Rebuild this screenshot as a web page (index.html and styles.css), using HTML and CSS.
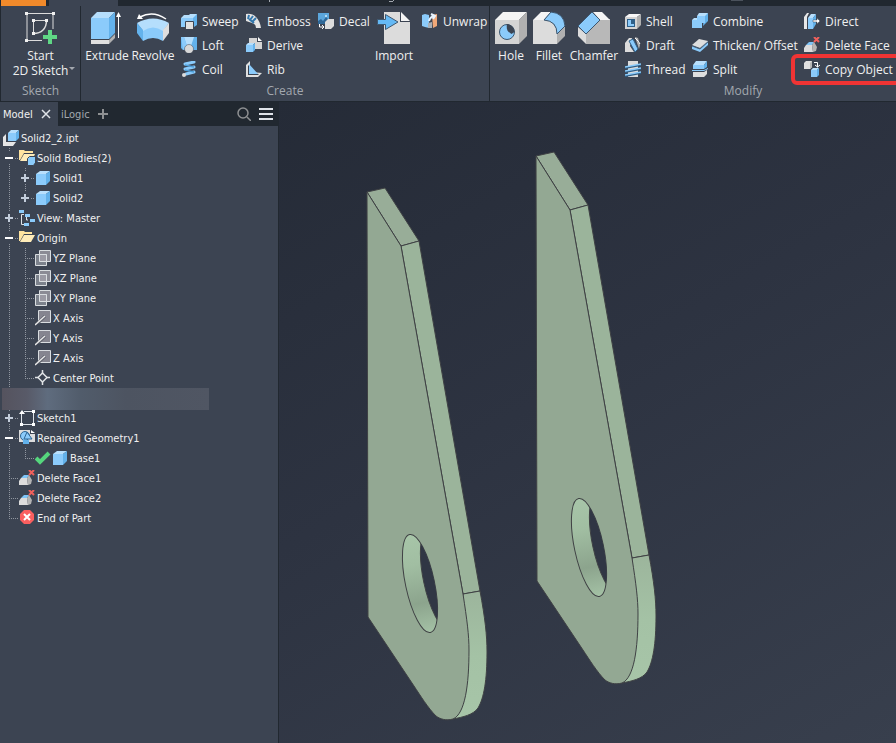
FILE: index.html
```
<!DOCTYPE html>
<html lang="en">

<head>
    <meta charset="UTF-8">
    <meta name="viewport" content="width=device-width, initial-scale=1.0">
    <title>Solid2_2.ipt</title>
    <link rel="stylesheet" href="styles.css">
</head>

<body>
    <svg class="defs" aria-hidden="true">
        <symbol id="cube" viewBox="0 0 16 16">
            <path fill="#8bcbfb" d="M1 4h10v11H1z" />
            <path fill="#b8dffc" d="M1 4l4-3h10l-4 3z" />
            <path fill="#62b1ea" d="M11 4l4-3v10l-4 4z" />
        </symbol>
        <symbol id="delete-face" viewBox="0 0 16 16">
            <path fill="#dcdcdc" d="M0 11l2-3h6l1 7H0z" />
            <path fill="#7fc4f7" d="M2 8l3-3h5L8 8z" />
            <path fill="#b4b4b4" d="M8 8l2-3 3 5-1 4-3 1z" />
            <path stroke="#f0605c" stroke-width="2" d="M10 0l5 5M15 0l-5 5" />
        </symbol>
        <symbol id="folder" viewBox="0 0 16 16">
            <path fill="#ffe4a0" d="M0 1h5l1 1h7v2H5l-4 7H0z" />
            <path fill="#ffecb9" d="M5 5h11l-4 7H1z" />
        </symbol>
        <symbol id="plane" viewBox="0 0 16 16">
            <path fill="#8b8b95" stroke="#d9dde0" d="M4.500 .5h11v11h-11z" />
            <path fill="#7c828c" stroke="#d9dde0" d="M.5 4.500h11v11H.5z" />
            <path fill="#9b9aa4" stroke="#d9dde0" d="M4.500 4.500h7v7h-7z" />
        </symbol>
        <symbol id="axis" viewBox="0 0 16 16">
            <path fill="#85858f" stroke="#d9dde0" d="M3.500 .5h12v12h-12z" />
            <path stroke="#5a5f69" stroke-width="3" d="M3 13l7-7" />
            <path stroke="#e8e8e8" stroke-width="1.500" d="M0 15l10-9" />
        </symbol>
    </svg>

    <div class="top-tabs">
        <span class="file-tab"></span>
        <span class="active-tab"></span>
        <svg class="tab-marks" viewBox="0 0 640 6" aria-hidden="true">
            <path stroke="#a3a8af" d="M148.500 0v2M268 1.500h4M272.500 0v1" />
            <path stroke="#4b525c" d="M610 .5h12" />
        </svg>
    </div>

    <div class="ribbon">
        <section class="panel sketch-panel">
            <div class="tools">
                <button class="big start">
                    <svg viewBox="0 0 32 32">
                        <path fill="none" stroke="#dcdcdc" d="M2 28V1.500h26V17M2 28.500h15" />
                        <path fill="none" stroke="#dcdcdc" d="M8.500 21.500v-13h13" />
                        <path fill="none" stroke="#dcdcdc" stroke-width="1.500" d="M21.500 8.500c0 8-5 13-13 13" />
                        <path fill="#f0f0f0" d="M0 0h3v3H0zM27 0h3v3h-3zM0 27h3v3H0zM7 7h3v3H7zM20 7h3v3h-3zM7 20h3v3H7z" />
                        <path fill="#5fd785" d="M23 18h4v5h5v4h-5v5h-4v-5h-5v-4h5z" />
                    </svg>
                    <span>Start<br>2D Sketch</span>
                    <i class="caret"></i>
                </button>
            </div>
            <h2>Sketch</h2>
        </section>

        <section class="panel create-panel">
            <div class="tools">
                <button class="big">
                    <svg viewBox="0 0 32 32">
                        <path fill="#e0e0e0" d="M0 28h18v4H0z" />
                        <path fill="#b0b0b0" d="M18 28l6-6v4l-6 6z" />
                        <path fill="#8bcbfb" d="M0 6h18v21H0z" />
                        <path fill="#b5defc" d="M0 6l6-6h18l-6 6z" />
                        <path fill="#63b2ec" d="M18 6l6-6v21l-6 6z" />
                        <path stroke="#fff" d="M27.500 3v23" />
                        <path fill="#fff" d="M25 5l2.500-5L30 5z" />
                    </svg>
                    <span>Extrude</span>
                </button>
                <button class="big">
                    <svg viewBox="0 0 32 32">
                        <path fill="#8bcbfb" d="M6 18q10-7 20 0v11q-10-6-20 0z" />
                        <path fill="#b5defc" d="M0 11q16-9 32 0l-6 8q-10-7-20 0z" />
                        <path fill="#63b2ec" d="M0 11l6 7v11l-6-8z" />
                        <path fill="#dedede" d="M26 18l6-7v10l-6 8z" />
                        <path fill="none" stroke="#fff" stroke-width="1.500" d="M3 5q13-7 26 2" />
                        <path fill="#fff" d="M0 7l2-5 4 5z" />
                    </svg>
                    <span>Revolve</span>
                </button>
                <div class="stack">
                    <button class="small">
                        <svg viewBox="0 0 16 16">
                            <path fill="#63b2ec" d="M8 4l8-3v11l-3 2H9z" />
                            <path fill="#8bcbfb" d="M0 5h12v4H6v5H0z" />
                            <path fill="#b5defc" d="M0 5l3-3h5l1-1h7l-4 4z" />
                            <path fill="#e0e0e0" stroke="#3c4452" d="M4.500 8.500h8v8h-8z" />
                        </svg>Sweep</button>
                    <button class="small">
                        <svg viewBox="0 0 16 16">
                            <path fill="#63b2ec" d="M0 0h16v13H2L0 11z" />
                            <path fill="#b5defc" d="M3 0h10l-3 9H6z" />
                            <path fill="#8bcbfb" d="M0 0h3l3 9-4 4z" />
                            <circle cx="8" cy="12" r="4.500" fill="#d8d8d8" stroke="#3c4452" stroke-width=".5" />
                        </svg>Loft</button>
                    <button class="small">
                        <svg viewBox="0 0 16 16">
                            <path fill="none" stroke="#8bcbfb" stroke-width="3" stroke-linecap="round" d="M4 3l9-2M4 8l9-2M5 13l8-2" />
                            <path stroke="#4f9fd8" stroke-width="1.500" d="M4 4l9 2M4 9l9 2" />
                            <circle cx="3" cy="14" r="2" fill="#dcdcdc" />
                        </svg>Coil</button>
                </div>
                <div class="stack">
                    <button class="small">
                        <svg viewBox="0 0 16 16">
                            <path fill="#e4e4e4" d="M0 1q6-1 10 3 4 4 5 11h-5q0-4-4-5L0 8z" />
                            <path fill="none" stroke="#3478ad" stroke-width="2" d="M3 2L2 6M7 3L4 7M10 5L6 9M3 6l5 4" />
                        </svg>Emboss</button>
                    <button class="small">
                        <svg viewBox="0 0 16 16">
                            <path fill="#d4d4d4" d="M3 1h8v4h5v7H9V6H3z" />
                            <path fill="#fff" d="M12 0l4 4h-4z" />
                            <path fill="#8bcbfb" d="M0 8h7v7H0z" />
                            <path fill="#b5defc" d="M0 8l2-2h7L7 8z" />
                            <path fill="#63b2ec" d="M7 8l2-2v7l-2 2z" />
                        </svg>Derive</button>
                    <button class="small">
                        <svg viewBox="0 0 16 16">
                            <path fill="#e0e0e0" d="M0 4l4-4v11l12 1-4 4H0z" />
                            <path fill="#3c4452" d="M2 5l1-1v8l10 1-1 1H2z" />
                            <path fill="#8bcbfb" d="M3 3l9 10H3z" />
                        </svg>Rib</button>
                </div>
                <div class="stack">
                    <button class="small">
                        <svg viewBox="0 0 16 16">
                            <path fill="#5ba6dc" d="M0 0h11v11H0z" />
                            <path fill="#2f6796" d="M0 8l3-2 2 2 3-4 3 3v4H0z" />
                            <circle cx="8" cy="3" r="1" fill="#d2eafa" />
                            <path fill="#dcdcdc" d="M7 9l3-3h6v7l-3 3H7z" />
                            <path fill="none" stroke="#fff" d="M1.500 11v3H6M4 12l2 2-2 2" />
                        </svg>Decal</button>
                </div>
                <button class="big">
                    <svg viewBox="0 0 32 32">
                        <path fill="#dcdcdc" d="M6 0h16v10h10v22H6z" />
                        <path fill="#f4f4f4" d="M23 0l9 9h-9z" />
                        <path fill="#65b9f5" stroke="#3f5870" d="M-.5 7.500h8v-5L20 10 7.500 17.500v-5h-8z" />
                    </svg>
                    <span>Import</span>
                </button>
                <div class="stack">
                    <button class="small">
                        <svg viewBox="0 0 16 16">
                            <path fill="#8bcbfb" d="M0 2l3-1 4 1v13l-4-1-3-1z" />
                            <path fill="#f0a878" d="M10 2l5-1v12l-4 2z" />
                            <path fill="#a8b0b8" d="M6 10l4-1v6H6z" />
                            <path fill="none" stroke="#e8f4ff" stroke-width="2" d="M7 8q1-4 5-5M9 1l4 2-2 3" />
                        </svg>Unwrap</button>
                </div>
            </div>
            <h2>Create</h2>
        </section>

        <section class="panel modify-panel">
            <div class="tools">
                <button class="big">
                    <svg viewBox="0 0 32 32">
                        <path fill="#d4d4d4" d="M0 8h24v24H0z" />
                        <path fill="#f4f4f4" d="M0 8l8-8h24l-8 8z" />
                        <path fill="#b0b0b0" d="M24 8l8-8v24l-8 8z" />
                        <circle cx="12" cy="20" r="7.500" fill="#8bcbfb" stroke="#3c566f" />
                        <path fill="#3c4452" d="M12 12q7 1 7.500 8l-3 2q-6-3-4.500-10z" />
                    </svg>
                    <span>Hole</span>
                </button>
                <button class="big">
                    <svg viewBox="0 0 32 32">
                        <path fill="#dcdcdc" d="M0 8h11q13 1 13 14v10H0z" />
                        <path fill="#f4f4f4" d="M0 8l8-8h10l-7 8z" />
                        <path fill="#b0b0b0" d="M24 22l8-8v10l-8 8z" />
                        <path fill="#8bcbfb" stroke="#3c566f" d="M11 8l7-8q13 1 14 14l-8 8Q24 9 11 8z" />
                    </svg>
                    <span>Fillet</span>
                </button>
                <button class="big">
                    <svg viewBox="0 0 32 32">
                        <path fill="#b8b8b8" d="M8 22L22 8l10-1v25H8z" />
                        <path fill="#dcdcdc" d="M0 15v9l8 8V22z" />
                        <path fill="#f4f4f4" d="M15 0h9l8 8H22z" />
                        <path fill="#8bcbfb" stroke="#3c566f" d="M0 14L14 0l8 8L8 22z" />
                    </svg>
                    <span>Chamfer</span>
                </button>
                <div class="stack">
                    <button class="small">
                        <svg viewBox="0 0 16 16">
                            <path fill="#d4d4d4" d="M0 4h12v12H0z" />
                            <path fill="#f8f8f8" d="M0 4l4-3h12l-4 3z" />
                            <path fill="#b0b0b0" d="M12 4l4-3v11l-4 4z" />
                            <path fill="#2e5f88" d="M2 6h8v8H2z" />
                            <path fill="#8bcbfb" d="M3 7h3v4h3v2H3z" />
                        </svg>Shell</button>
                    <button class="small">
                        <svg viewBox="0 0 16 16">
                            <path fill="#dcdcdc" d="M0 6l4-5h3L5 9l4 6H0z" />
                            <path fill="#b0b0b0" d="M10 0l3 1 2 7-1 4z" />
                            <path fill="#8bcbfb" stroke="#35648b" d="M4 4l4-2 5 10-3 3z" />
                            <path stroke="#fff" d="M10 1l3 3 2 3" />
                        </svg>Draft</button>
                    <button class="small">
                        <svg viewBox="0 0 16 16">
                            <path fill="#dcdcdc" d="M3 0h10v16H3z" />
                            <path stroke="#2f5e86" stroke-width="2" d="M0 7l16-3M0 11l16-3M0 15l16-3" />
                            <path stroke="#8bcbfb" stroke-width="1.500" d="M0 6l16-3M0 10l16-3M0 14l16-3" />
                        </svg>Thread</button>
                </div>
                <div class="stack">
                    <button class="small">
                        <svg viewBox="0 0 16 16">
                            <path fill="#62b1ea" d="M12 2l4-2v8l-5 5z" />
                            <path fill="#8bcbfb" d="M5 3h8v7h-3v5H0V7h5z" />
                            <path fill="#b8dffc" d="M5 3l2-3h9l-3 3zM0 7l2-2h3v2z" />
                        </svg>Combine</button>
                    <button class="small">
                        <svg viewBox="0 0 16 16">
                            <path fill="#8bcbfb" d="M0 9l8 3 8-8v4l-8 7-8-3z" />
                            <path fill="#dedede" d="M0 8l7-6 9 2-8 7z" />
                            <path fill="none" stroke="#47637e" d="M0 9l8 3 8-7" />
                        </svg>Thicken/ Offset</button>
                    <button class="small">
                        <svg viewBox="0 0 16 16">
                            <path fill="#8bcbfb" d="M1 4h11v4H1z" />
                            <path fill="#b8dffc" d="M1 4l3-4h11l-3 4z" />
                            <path fill="#62b1ea" d="M12 4l3-4v6l-3 2z" />
                            <path fill="#dedede" d="M1 11h11l3-2v4l-3 3H1z" />
                            <path fill="none" stroke="#8bcbfb" d="M0 9.500h12l4-2" />
                        </svg>Split</button>
                </div>
                <div class="stack">
                    <button class="small">
                        <svg viewBox="0 0 16 16">
                            <path fill="#e8e8e8" d="M0 4l3-4h2L3 4v12H0z" />
                            <path fill="#8bcbfb" d="M4 5h5v11H4z" />
                            <path fill="#b8dffc" d="M4 5l3-4h5L9 5z" />
                            <path fill="#62b1ea" d="M9 5l3-4v10l-3 5z" />
                            <path fill="#fff" stroke="#3c4452" stroke-width=".5" d="M9 7h4V5l3 3-3 3V9H9z" />
                        </svg>Direct</button>
                    <button class="small"><svg><use href="#delete-face" /></svg>Delete Face</button>
                    <button class="small marked">
                        <svg viewBox="0 0 16 16">
                            <path fill="#e0e0e0" d="M0 2l2-2h6v6L6 8H0z" />
                            <path fill="#b8b8b8" d="M6 2l2-2v6L6 8z" />
                            <path fill="none" stroke="#fff" d="M10 1.500h3.500V6M11 4l2.500 2L16 4" />
                            <path fill="#8bcbfb" d="M7 9h6v7H7z" />
                            <path fill="#b8dffc" d="M7 9l2-2h6l-2 2z" />
                            <path fill="#62b1ea" d="M13 9l2-2v7l-2 2z" />
                        </svg>Copy Object</button>
                </div>
            </div>
            <h2>Modify</h2>
        </section>
    </div>

    <main>
        <aside class="browser">
            <div class="browser-tabs">
                <div class="tab active">
                    <span>Model</span>
                    <button aria-label="Close"><svg viewBox="0 0 10 10"><path stroke="#dfe3e8" stroke-width="1.500" d="M1 1l8 8M9 1L1 9" /></svg></button>
                </div>
                <div class="tab">
                    <span>iLogic</span>
                    <button aria-label="Add"><svg viewBox="0 0 10 10"><path stroke="#8e9092" stroke-width="2" d="M5 0v10M0 5h10" /></svg></button>
                </div>
                <button class="search" aria-label="Search"><svg viewBox="0 0 14 14"><circle cx="6" cy="6" r="5" fill="none" stroke="#8e9092" stroke-width="1.500" /><path stroke="#8e9092" stroke-width="1.500" d="M10 10l4 4" /></svg></button>
                <button class="menu" aria-label="Menu"><svg viewBox="0 0 14 14"><path stroke="#dfe3e8" stroke-width="2" d="M0 2h14M0 7h14M0 12h14" /></svg></button>
            </div>

            <div class="root">
                <svg viewBox="0 0 16 16">
                    <path fill="#e6e6e6" d="M0 7l3-3v8h10l-3 4H0z" />
                    <path fill="#8bcbfb" d="M5 3h8v8H5z" />
                    <path fill="#b8dffc" d="M5 3l3-3h8l-3 3z" />
                    <path fill="#62b1ea" d="M13 3l3-3v8l-3 3z" />
                </svg>Solid2_2.ipt
            </div>
            <ul class="tree">
                <li>
                    <div class="row"><button class="toggle open" aria-label="Collapse"></button>
                        <svg viewBox="0 0 16 16">
                            <path fill="#ffe4a0" d="M0 0h5l1 1h8v2H5l-4 7H0z" />
                            <path fill="#ffecb9" d="M5 4h11l-3 7H1z" />
                            <path fill="#8bcbfb" stroke="#3c4452" d="M8.500 8.500l2-2h6v6l-2 3h-6z" />
                        </svg>Solid Bodies(2)</div>
                    <ul>
                        <li><div class="row"><button class="toggle" aria-label="Expand"></button><svg><use href="#cube" /></svg>Solid1</div></li>
                        <li><div class="row"><button class="toggle" aria-label="Expand"></button><svg><use href="#cube" /></svg>Solid2</div></li>
                    </ul>
                </li>
                <li>
                    <div class="row"><button class="toggle" aria-label="Expand"></button>
                        <svg viewBox="0 0 16 16">
                            <path fill="none" stroke="#dfe3e8" d="M5 4.500H2.500v10H5M7.500 7v3H9" />
                            <path fill="#8bcbfb" d="M0 0h5v3H0zM6 4h5v3H6zM11 9h5v3h-5zM5 13h5v3H5z" />
                        </svg>View: Master</div>
                </li>
                <li>
                    <div class="row"><button class="toggle open" aria-label="Collapse"></button><svg><use href="#folder" /></svg>Origin</div>
                    <ul>
                        <li><div class="row"><svg><use href="#plane" /></svg>YZ Plane</div></li>
                        <li><div class="row"><svg><use href="#plane" /></svg>XZ Plane</div></li>
                        <li><div class="row"><svg><use href="#plane" /></svg>XY Plane</div></li>
                        <li><div class="row"><svg><use href="#axis" /></svg>X Axis</div></li>
                        <li><div class="row"><svg><use href="#axis" /></svg>Y Axis</div></li>
                        <li><div class="row"><svg><use href="#axis" /></svg>Z Axis</div></li>
                        <li><div class="row">
                                <svg viewBox="0 0 16 16">
                                    <path fill="none" stroke="#e0e3e6" stroke-width="1.500" d="M7.500 3L12 7.500 7.500 12 3 7.500z" />
                                    <path stroke="#e0e3e6" stroke-width="1.500" d="M7.500 0v4M7.500 11v4M0 7.500h4M11 7.500h4" />
                                </svg>Center Point</div></li>
                    </ul>
                </li>
                <li class="hidden-node"></li>
                <li>
                    <div class="row"><button class="toggle" aria-label="Expand"></button>
                        <svg viewBox="0 0 16 16">
                            <path fill="none" stroke="#dfe3e8" d="M2.500 14V2M2 14.500h12M14.500 14V2M5 1.500h9" />
                            <path fill="#fff" d="M0 4l3-4 3 4zM13 0h3v3h-3zM1 13h3v3H1zM13 13h3v3h-3z" />
                        </svg>Sketch1</div>
                </li>
                <li>
                    <div class="row"><button class="toggle open" aria-label="Collapse"></button>
                        <svg viewBox="0 0 16 16">
                            <path fill="#dcdcdc" d="M0 0h11v4h5v8H0z" />
                            <path fill="#fff" d="M12 0l4 3h-4z" />
                            <circle cx="6" cy="6" r="4.500" fill="#8bcbfb" stroke="#2f6694" />
                            <path fill="#8bcbfb" stroke="#2f6694" d="M8 2l5 7H5z" />
                            <path fill="#62b1ea" d="M4 10h6v4H4z" />
                        </svg>Repaired Geometry1</div>
                    <ul>
                        <li><div class="row"><svg viewBox="0 0 16 16"><path fill="none" stroke="#55d67d" stroke-width="4" d="M1 8l4 4L14 3" /></svg><svg class="second"><use href="#cube" /></svg>Base1</div></li>
                    </ul>
                </li>
                <li><div class="row"><svg><use href="#delete-face" /></svg>Delete Face1</div></li>
                <li><div class="row"><svg><use href="#delete-face" /></svg>Delete Face2</div></li>
                <li><div class="row">
                        <svg viewBox="0 0 16 16">
                            <path fill="#fa5f5f" d="M5 0h6l4 4v6l-4 4H5l-4-4V4z" />
                            <path stroke="#fff" stroke-width="2" d="M5 4l6 6M11 4l-6 6" />
                        </svg>End of Part</div></li>
            </ul>
        </aside>

        <div class="viewport">
            <svg viewBox="279 102 617 641" preserveAspectRatio="xMinYMin meet" role="img" aria-label="Two solid bodies">
                <defs>
                    <linearGradient id="edge" x1="0" y1="591" x2="0" y2="720" gradientUnits="userSpaceOnUse">
                        <stop offset="0" stop-color="#9cb59c" />
                        <stop offset=".5" stop-color="#a4c2a5" />
                        <stop offset="1" stop-color="#a7c5a8" />
                    </linearGradient>
                    <linearGradient id="bore" x1="0" y1="535" x2="0" y2="632" gradientUnits="userSpaceOnUse">
                        <stop offset="0" stop-color="#a7c5a8" />
                        <stop offset=".3" stop-color="#a1bea2" />
                        <stop offset=".7" stop-color="#8ca48d" />
                        <stop offset="1" stop-color="#a3c0a4" />
                    </linearGradient>
                    <clipPath id="front-hole">
                        <ellipse cx="420" cy="583.500" rx="14.500" ry="50" transform="rotate(-12 420 583.500)" />
                    </clipPath>
                    <g id="solid" stroke="#3f4144" stroke-linejoin="round">
                        <path fill="#98ad98" d="M367 192l18-4 34 53-18 5z" />
                        <path fill="#9bb49b" d="M401 246l18-5 61 350-17 3z" />
                        <path fill="url(#edge)" d="M463 594l17-3C485 618 487 635 487 652C487 680 484 698 478 708C473 715 463 717 453 719z" />
                        <path fill="#93a893" d="M367 192l34 54 62 348C467 620 469 635 469 650C469 685 465 714 453 719C446 721 440 719 436 716C428 708 420 695 414 686L368 617z" />
                        <ellipse cx="420" cy="583.500" rx="14.500" ry="50" transform="rotate(-12 420 583.500)" fill="url(#bore)" />
                        <g clip-path="url(#front-hole)">
                            <ellipse cx="438" cy="579.500" rx="14.500" ry="50" transform="rotate(-12 438 579.500)" fill="#303644" />
                        </g>
                    </g>
                </defs>
                <use href="#solid" />
                <use href="#solid" transform="translate(169 -36)" />
            </svg>
        </div>
    </main>
</body>

</html>
```
FILE: styles.css
```
*,
*::after {
    box-sizing: border-box;
}

body {
    margin: 0;
    height: 100vh;
    display: flex;
    flex-direction: column;
    overflow: hidden;
    background: #212830;
    color: #f0f0f0;
    font-family: "Open Sans", "Segoe UI", sans-serif;
    font-size: 12px;
}

button {
    padding: 0;
    border: 0;
    background: none;
    color: inherit;
    font: inherit;
    white-space: nowrap;
}

svg {
    display: block;
    flex: none;
}

.defs {
    position: absolute;
    width: 0;
    height: 0;
}

/* ribbon */
.top-tabs {
    display: flex;
    flex: none;
    gap: 3px;
    height: 6px;
    padding-left: 1px;
    background: #212830;
}

.file-tab {
    width: 45px;
    background: #f18a2b;
}

.active-tab {
    width: 69px;
    background: #3c4452;
}

.tab-marks {
    width: 640px;
    height: 6px;
}

.ribbon {
    display: flex;
    flex: none;
    height: 96px;
    padding-left: 1px;
    overflow: hidden;
    border-bottom: 1px solid #212830;
}

.panel {
    display: flex;
    flex: none;
    flex-direction: column;
    justify-content: space-between;
    padding-top: 3px;
    background: #3c4452;
    border-right: 1px solid #212830;
}

.panel h2 {
    margin: 0;
    padding-bottom: 2px;
    color: #a3a8af;
    font-size: 12px;
    font-weight: normal;
    line-height: 16px;
    text-align: center;
}

.sketch-panel {
    width: 80px;
}

.create-panel {
    width: 409px;
}

.modify-panel {
    width: 507px;
}

.tools {
    display: flex;
    align-items: flex-start;
}

.sketch-panel .tools {
    justify-content: center;
}

.create-panel .tools {
    padding-left: 3px;
}

.big {
    position: relative;
    display: flex;
    flex-direction: column;
    align-items: center;
    width: 46px;
    padding-top: 3px;
    line-height: 15px;
}

.big svg {
    width: 32px;
    height: 32px;
    margin-bottom: 4px;
    overflow: visible;
}

.modify-panel .big {
    width: 38px;
}

.modify-panel .big:first-child {
    margin-left: 2px;
}

.modify-panel .big:nth-child(3) {
    width: 52px;
}

.caret {
    position: absolute;
    right: -6px;
    bottom: 8px;
    border: 3px solid transparent;
    border-top-color: #a3a8af;
    border-bottom: 0;
}

.start {
    width: 56px;
}

.stack {
    width: 65px;
    padding-left: 5px;
}

.create-panel .stack:nth-child(4) {
    width: 72px;
}

.create-panel .stack:nth-child(5) {
    width: 58px;
}

.modify-panel .stack {
    width: 67px;
}

.modify-panel .stack:nth-child(5) {
    width: 112px;
}

.small {
    position: relative;
    display: flex;
    align-items: center;
    gap: 5px;
    height: 24px;
}

.small svg {
    width: 16px;
    height: 16px;
}

.marked::after {
    content: "";
    position: absolute;
    top: -3px;
    left: -13px;
    width: 124px;
    height: 31px;
    border: 4px solid #f03434;
    border-radius: 6px;
}

/* model browser */
main {
    display: flex;
    flex: 1;
    min-height: 0;
}

.browser {
    flex: none;
    width: 279px;
    background: #3c4452;
    border-right: 1px solid #212830;
    font-family: "DejaVu Sans Condensed", "DejaVu Sans", Tahoma, sans-serif;
    font-size: 11px;
}

.browser-tabs {
    display: flex;
    align-items: center;
    height: 24px;
    padding-right: 5px;
    background: #212830;
}

.tab {
    display: flex;
    align-items: center;
    gap: 8px;
    height: 24px;
    padding: 0 7px 0 3px;
    color: #a3a8af;
}

.tab.active {
    width: 58px;
    background: #3c4452;
    color: #f0f0f0;
}

.tab svg {
    width: 10px;
    height: 10px;
}

.search {
    margin-left: auto;
}

.menu {
    margin-left: 8px;
}

.search svg,
.menu svg {
    width: 14px;
    height: 14px;
}

.root,
.row {
    display: flex;
    align-items: center;
    gap: 2px;
    height: 20px;
    white-space: nowrap;
}

.root {
    margin-top: 2px;
    padding-left: 3px;
}

.root svg,
.row svg {
    width: 16px;
    height: 16px;
}

.tree,
.tree ul {
    margin: 0;
    padding: 0;
    list-style: none;
}

.tree ul {
    margin-left: 16px;
}

/* dotted guides: one down the branch, one across to the icon */
.tree li {
    background-image:
        repeating-linear-gradient(#9197a0 0 1px, transparent 1px 2px),
        repeating-linear-gradient(90deg, #9197a0 0 1px, transparent 1px 2px);
    background-position: 9px 0, 9px 10px;
    background-size: 1px 100%, 9px 1px;
    background-repeat: no-repeat;
}

.tree li:last-child {
    background-size: 1px 10px, 9px 1px;
}

.row {
    position: relative;
    padding-left: 19px;
}

.row .second {
    margin-left: -1px;
}

.toggle {
    position: absolute;
    left: 3px;
    top: 4px;
    width: 12px;
    height: 12px;
    background:
        linear-gradient(#c3cddb, #c3cddb) 2px 5px / 8px 2px no-repeat,
        linear-gradient(#c3cddb, #c3cddb) 5px 2px / 2px 8px no-repeat,
        #3c4452;
}

.toggle.open {
    background: linear-gradient(#fff, #fff) 2px 5px / 8px 2px no-repeat, #3c4452;
}

.tree .hidden-node {
    position: relative;
    width: 207px;
    height: 22px;
    margin: 0 0 -2px 2px;
    background: linear-gradient(90deg, #55535e, #585a68 12%, #5f6c7e 22%, #515c6b 38%, #4d5461 60%, #505663);
}

/* graphics window */
.viewport {
    flex: 1;
    min-width: 0;
    background: linear-gradient(150deg, #252b37, #2d3341 45%, #383f4d);
}

.viewport svg {
    width: 100%;
    height: 100%;
}
```
